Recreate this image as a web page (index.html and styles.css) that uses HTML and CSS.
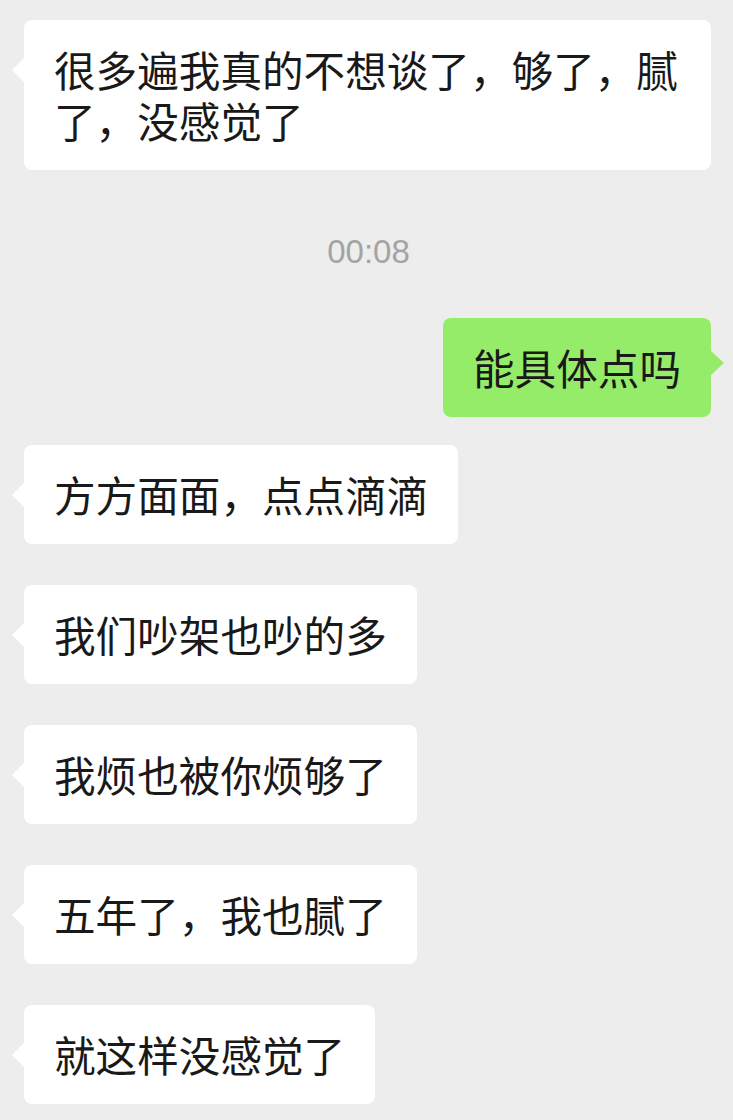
FILE: index.html
```html
<!DOCTYPE html>
<html lang="zh-CN">
<head>
  <meta charset="UTF-8">
  <meta name="viewport" content="width=device-width, initial-scale=1.0">
  <title>聊天</title>
  <link rel="stylesheet" href="styles.css">
</head>
<body>

<main class="chat">
  <div class="row left">
    <div class="bubble">很多遍我真的不想谈了，够了，腻了，没感觉了</div>
  </div>

  <div class="time">00:08</div>

  <div class="row right">
    <div class="bubble mine">能具体点吗</div>
  </div>

  <div class="row left first-after-mine">
    <div class="bubble">方方面面，点点滴滴</div>
  </div>
  <div class="row left">
    <div class="bubble">我们吵架也吵的多</div>
  </div>
  <div class="row left">
    <div class="bubble">我烦也被你烦够了</div>
  </div>
  <div class="row left">
    <div class="bubble">五年了，我也腻了</div>
  </div>
  <div class="row left">
    <div class="bubble">就这样没感觉了</div>
  </div>
</main>

</body>
</html>
```

FILE: styles.css
```css
* {
  margin: 0;
  padding: 0;
  box-sizing: border-box;
}
body {
  background: #ededed;
  font-family: "Noto Sans CJK SC", "Noto Sans", sans-serif;
  color: #191919;
  height: 1120px;
  overflow: hidden;
}
.chat {
  display: flex;
  flex-direction: column;
  padding: 20px 22px 0 24px;
}
.row {
  display: flex;
  margin-top: 41px;
}
.row:first-child {
  margin-top: 0;
}
.row.right {
  justify-content: flex-end;
  margin-top: 46px;
}
.row.first-after-mine {
  margin-top: 28px;
}
.bubble {
  position: relative;
  max-width: 100%;
  background: #fff;
  border-radius: 8px;
  padding: 24px 30px;
  font-size: 41.6px;
  line-height: 51px;
}
.bubble::before {
  content: "";
  position: absolute;
  top: 38px;
  left: -12px;
  border-top: 12px solid transparent;
  border-bottom: 12px solid transparent;
  border-right: 12px solid #fff;
}
.bubble.mine {
  background: #95ec69;
}
.bubble.mine::before {
  left: auto;
  right: -13px;
  top: 33px;
  border-right: none;
  border-left: 13px solid #95ec69;
}
.time {
  margin-top: 62px;
  text-align: center;
  font-family: "Liberation Sans", Arial, sans-serif;
  font-size: 33px;
  line-height: 40px;
  color: #a3a3a3;
  padding-left: 2px;
}
```
